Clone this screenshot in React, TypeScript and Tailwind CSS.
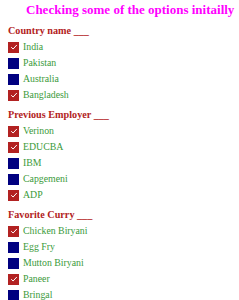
import React from 'react';

type Option = { label: string; checked: boolean };

const groups: { title: string; options: Option[] }[] = [
  {
    title: 'Country name ___',
    options: [
      { label: 'India', checked: true },
      { label: 'Pakistan', checked: false },
      { label: 'Australia', checked: false },
      { label: 'Bangladesh', checked: true },
    ],
  },
  {
    title: 'Previous Employer ___',
    options: [
      { label: 'Verinon', checked: true },
      { label: 'EDUCBA', checked: true },
      { label: 'IBM', checked: false },
      { label: 'Capgemeni', checked: false },
      { label: 'ADP', checked: true },
    ],
  },
  {
    title: 'Favorite Curry ___',
    options: [
      { label: 'Chicken Biryani', checked: true },
      { label: 'Egg Fry', checked: false },
      { label: 'Mutton Biryani', checked: false },
      { label: 'Paneer', checked: true },
      { label: 'Bringal', checked: false },
    ],
  },
];

function Box({ checked }: { checked: boolean }) {
  return checked ? (
    <span className="flex h-[11px] w-[11px] shrink-0 items-center justify-center bg-[#b22222]">
      <svg width="8" height="8" viewBox="0 0 8 8" fill="none">
        <path d="M1.2 4.2 L3.1 6 L6.8 2" stroke="white" strokeWidth="1" />
      </svg>
    </span>
  ) : (
    <span className="h-[11px] w-[11px] shrink-0 bg-[#000080]" />
  );
}

export default function App() {
  return (
    <div className="w-[239px] bg-white pl-2 font-[Liberation_Serif,Times_New_Roman,serif]">
      <h1 className="flex h-[19px] items-center pl-[18px] text-[13px] leading-none font-bold whitespace-nowrap text-[#ff00ff]">
        Checking some of the options initailly
      </h1>
      {groups.map((g) => (
        <div key={g.title}>
          <h2 className="flex h-[20px] items-end pb-[3px] text-[10.2px] leading-none font-bold text-[#b22222]">{g.title}</h2>
          <div className="flex flex-col">
            {g.options.map((o) => (
              <label key={o.label} className="flex h-[16px] items-center gap-[4px]">
                <Box checked={o.checked} />
                <span className="text-[9.8px] leading-none text-[#3a9a3a]">{o.label}</span>
              </label>
            ))}
          </div>
        </div>
      ))}
    </div>
  );
}
